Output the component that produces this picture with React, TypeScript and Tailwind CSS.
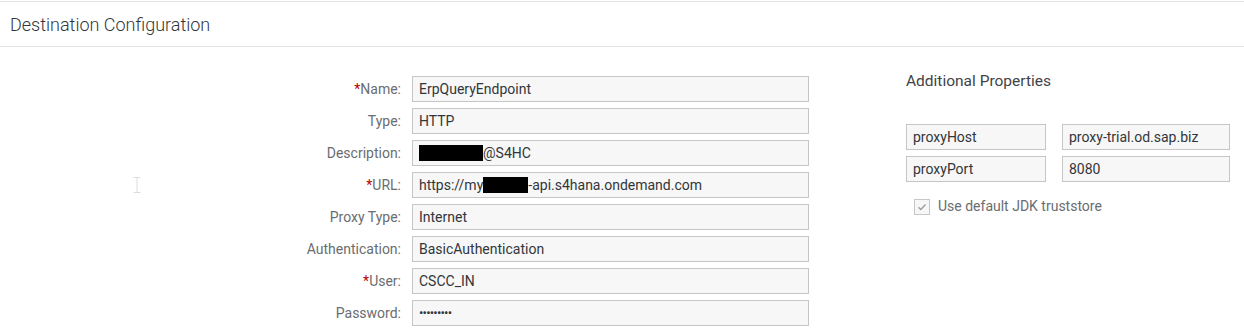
import React from 'react';

interface Field {
  label: string;
  required?: boolean;
  value: React.ReactNode;
}

const Redacted = ({ w }: { w: number }) => (
  <span className="inline-block bg-black h-[16px] align-middle" style={{ width: w }} />
);

const FIELDS: Field[] = [
  { label: 'Name', required: true, value: 'ErpQueryEndpoint' },
  { label: 'Type', value: 'HTTP' },
  {
    label: 'Description',
    value: (
      <>
        <Redacted w={64} />
        @S4HC
      </>
    ),
  },
  {
    label: 'URL',
    required: true,
    value: (
      <>
        https://my
        <Redacted w={45} />
        -api.s4hana.ondemand.com
      </>
    ),
  },
  { label: 'Proxy Type', value: 'Internet' },
  { label: 'Authentication', value: 'BasicAuthentication' },
  { label: 'User', required: true, value: 'CSCC_IN' },
  { label: 'Password', value: <span className="text-[13px] tracking-[-0.8px]">•••••••••</span> },
];

function Input({ children, width }: { children: React.ReactNode; width: string }) {
  return (
    <div
      className={`${width} h-[26px] bg-[#f7f7f7] border border-[#c6c6c6] pl-[6px] flex items-center text-[14px] text-[#32363a] whitespace-nowrap`}
    >
      {children}
    </div>
  );
}

export default function App() {
  return (
    <div className="relative w-[1244px] h-[331px] bg-white overflow-hidden font-['Roboto','Liberation_Sans',sans-serif]">
      {/* Header */}
      <div className="mt-px h-[46px] border-y border-[#e5e5e5] pl-[10px] flex items-center text-[18px] font-light text-[#32363a]">
        Destination Configuration
      </div>

      {/* Mouse cursor */}
      <svg className="absolute left-[133px] top-[177px]" width="8" height="16" viewBox="0 0 8 16">
        <path d="M0.5 0.5h7M4 0.5v15M0.5 15.5h7" stroke="#dcdcdc" strokeWidth="1" fill="none" />
      </svg>

      <div className="flex items-start pt-[29px]">
        {/* Main form */}
        <div className="ml-[251px] grid grid-cols-[150px_397px] gap-x-[11px] gap-y-[6px]">
          {FIELDS.map((f) => (
            <React.Fragment key={f.label}>
              <div className="h-[26px] flex items-center justify-end text-[14px] text-[#6a6d70]">
                {f.required && <span className="text-[#bb0000]">*</span>}
                {f.label}:
              </div>
              <Input width="w-[397px]">{f.value}</Input>
            </React.Fragment>
          ))}
        </div>

        {/* Additional properties */}
        <div className="ml-[97px] flex flex-col">
          <div className="leading-[10px] text-[15.5px] text-[#3f4346]">Additional Properties</div>
          <div className="mt-[38px] grid grid-cols-[140px_168px] gap-x-[16px] gap-y-[6px]">
            <Input width="w-[140px]">proxyHost</Input>
            <Input width="w-[168px]">proxy-trial.od.sap.biz</Input>
            <Input width="w-[140px]">proxyPort</Input>
            <Input width="w-[168px]">8080</Input>
          </div>
          <label className="mt-[14px] ml-[8px] flex items-center gap-[8px] text-[14px] text-[#6a6d70]">
            <span className="w-[16px] h-[16px] border border-[#c6c6c6] bg-[#f7f7f7] flex items-center justify-center">
              <svg width="10" height="10" viewBox="0 0 10 10">
                <path d="M1.5 5.2l2.3 2.3 4.7-5" stroke="#9a9a9a" strokeWidth="1.3" fill="none" />
              </svg>
            </span>
            Use default JDK truststore
          </label>
        </div>
      </div>
    </div>
  );
}
